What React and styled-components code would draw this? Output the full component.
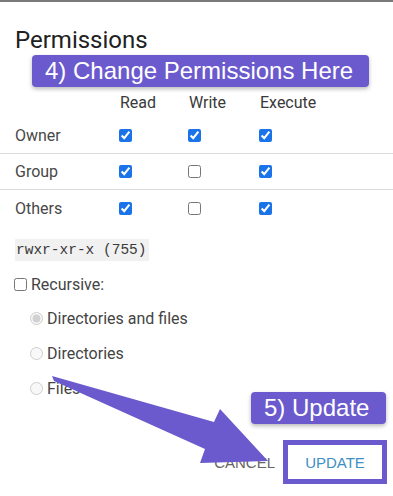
import React from "react";
import styled, { createGlobalStyle } from "styled-components";

const GlobalStyle = createGlobalStyle`
  html, body {
    margin: 0;
    background: #fff;
  }
  body {
    font-family: Roboto, "Noto Sans", sans-serif;
  }
`;

const Page = styled.div`
  position: relative;
  width: 393px;
  height: 496px;
  overflow: hidden;
  background: #fff;
`;

const TopRule = styled.div`
  height: 2px;
  background: #7a7a7a;
`;

const Dialog = styled.div`
  padding: 0 15px;
`;

const Title = styled.h2`
  margin: 24px 0 0;
  font-size: 24px;
  line-height: 28px;
  font-weight: 400;
  color: #212121;
`;

const Table = styled.div`
  margin: 33px -15px 0;
`;

const Row = styled.div`
  display: grid;
  grid-template-columns: 104px 69px 71px 1fr;
  align-items: center;
  box-sizing: border-box;
  height: ${(p) => (p.$head ? "31px" : "36px")};
  padding-left: 15px;
  border-bottom: ${(p) => (p.$line ? "1px solid #dcdcdc" : "none")};
  font-size: 16px;
  color: #484848;
`;

const Cell = styled.div`
  display: flex;
  align-items: center;
  padding-left: ${(p) => (p.$text ? "1px" : "0")};
  color: ${(p) => (p.$text ? "#3a3a3a" : "inherit")};
`;

const Box = styled.input.attrs({ type: "checkbox" })`
  width: 13px;
  height: 13px;
  margin: 0;
  accent-color: #1a73e8;
`;

const Mode = styled.code`
  display: inline-block;
  margin-top: 13px;
  padding: 0 2px 0 1px;
  height: 22px;
  line-height: 22px;
  background: #f1f1f1;
  font-family: "Liberation Mono", "DejaVu Sans Mono", monospace;
  font-size: 14.5px;
  color: #3a3a3a;
`;

const Option = styled.label`
  display: flex;
  align-items: center;
  gap: 4px;
  height: ${(p) => (p.$radio ? "35px" : "22px")};
  margin-left: ${(p) => (p.$radio ? "15px" : "-1px")};
  font-size: 16px;
  color: #444;
`;

const Recursive = styled(Option)`
  margin-top: 12px;
`;

const RadioGroup = styled.div`
  margin-top: 6px;
`;

const Radio = styled.input.attrs({ type: "radio", disabled: true })`
  width: 13px;
  height: 13px;
  margin: 0;
`;

const Footer = styled.div`
  display: flex;
  justify-content: flex-end;
  align-items: center;
  margin: 34px -9px 0 0;
`;

const TextButton = styled.button`
  height: 44px;
  padding: 0 8px;
  border: ${(p) => (p.$highlight ? "5px solid #6a5acd" : "none")};
  width: ${(p) => (p.$highlight ? "104px" : "auto")};
  background: #fff;
  font-family: "Liberation Sans", Arial, sans-serif;
  font-size: 15px;
  text-transform: uppercase;
  color: ${(p) => (p.$primary ? "#3d8fc4" : "#666")};
  cursor: pointer;
`;

const Callout = styled.div`
  position: absolute;
  left: ${(p) => p.$x}px;
  top: ${(p) => p.$y}px;
  height: 32px;
  padding: 0 ${(p) => p.$pad}px 0 13px;
  border-radius: 4px;
  background: #6a5acd;
  box-shadow: 0 2px 4px rgba(0, 0, 0, 0.28);
  font-family: "Liberation Sans", Arial, sans-serif;
  font-size: 24px;
  line-height: 32px;
  color: #fff;
  white-space: nowrap;
  z-index: 2;
`;

const Arrow = styled.svg`
  position: absolute;
  left: 0;
  top: 0;
  z-index: 3;
  pointer-events: none;
`;

const perms = [
  { who: "Owner", r: true, w: true, x: true },
  { who: "Group", r: true, w: false, x: true },
  { who: "Others", r: true, w: false, x: true },
];

export default function App() {
  return (
    <Page>
      <GlobalStyle />
      <TopRule />
      <Dialog>
        <Title>Permissions</Title>
        <Table>
          <Row $head>
            <Cell />
            <Cell $text>Read</Cell>
            <Cell $text>Write</Cell>
            <Cell $text>Execute</Cell>
          </Row>
          {perms.map((p, i) => (
            <Row key={p.who} $line={i < perms.length - 1}>
              <Cell>{p.who}</Cell>
              <Cell><Box defaultChecked={p.r} /></Cell>
              <Cell><Box defaultChecked={p.w} /></Cell>
              <Cell><Box defaultChecked={p.x} /></Cell>
            </Row>
          ))}
        </Table>
        <Mode>rwxr-xr-x (755)</Mode>
        <Recursive>
          <Box />
          Recursive:
        </Recursive>
        <RadioGroup>
          <Option $radio>
            <Radio name="rec" defaultChecked />
            Directories and files
          </Option>
          <Option $radio>
            <Radio name="rec" />
            Directories
          </Option>
          <Option $radio>
            <Radio name="rec" />
            Files
          </Option>
        </RadioGroup>
        <Footer>
          <TextButton>Cancel</TextButton>
          <TextButton $primary $highlight>Update</TextButton>
        </Footer>
      </Dialog>

      <Callout $x={32} $y={55} $pad={16}>4) Change Permissions Here</Callout>
      <Callout $x={251} $y={392} $pad={17}>5) Update</Callout>

      <Arrow width="393" height="496" viewBox="0 0 393 496">
        <polygon
          points="52,376 214,422 220,409 268,461 200,463 205,449 54,381"
          fill="#6a5acd"
        />
      </Arrow>
    </Page>
  );
}
